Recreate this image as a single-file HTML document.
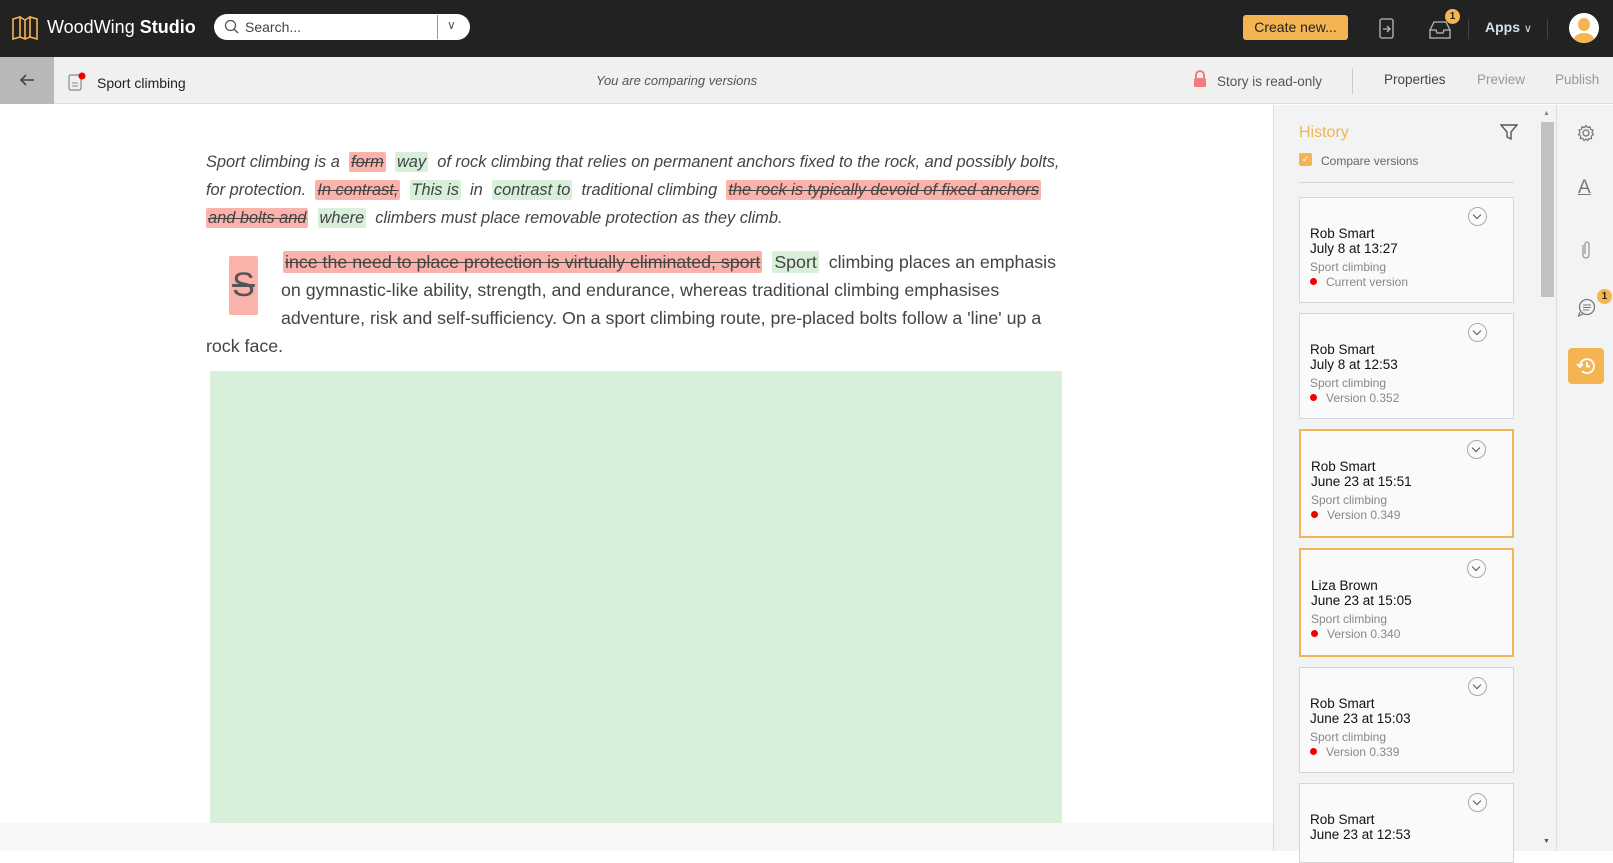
<!DOCTYPE html>
<html><head><meta charset="utf-8"><style>
*{margin:0;padding:0;box-sizing:border-box}
body{width:1613px;height:851px;overflow:hidden;background:#fff;font-family:"Liberation Sans",sans-serif;position:relative;color:#333}
.a{position:absolute}
.top{left:0;top:0;width:1613px;height:57px;background:#222}
.sub{left:0;top:57px;width:1613px;height:47px;background:#f0f0f0;border-bottom:1px solid #ddd}
.line{position:absolute;left:206px;white-space:nowrap;font-size:17.8px;color:#444;line-height:28px}
.it{font-style:italic;font-size:16.4px}
.d{background:#fbb2ab;text-decoration:line-through;padding:1px 2px;border-radius:2px}
.g{background:#d8efda;padding:1px 2px;border-radius:2px}
.card{position:absolute;left:1299px;width:215px;background:#fafafa;border:1px solid #d6d6d6}
.card.sel{border:2px solid #f5b452}
.card .n{position:absolute;left:10px;top:28px;font-size:13.5px;color:#111;line-height:15px}
.card .s{position:absolute;left:10px;top:62px;font-size:12px;color:#888;line-height:15px}
.card .dot{display:inline-block;width:7px;height:7px;border-radius:50%;background:#e00;margin-right:9px;vertical-align:1px}
.card .c{position:absolute;right:26px;top:9px;width:19px;height:19px;border:1px solid #aaa;border-radius:50%}
.card .c:after{content:"";position:absolute;left:5px;top:4px;width:5px;height:5px;border-right:1.3px solid #555;border-bottom:1.3px solid #555;transform:rotate(45deg)}
</style></head><body>
<div class="a top"></div>
<svg class="a" style="left:12px;top:16px" width="26" height="24" viewBox="0 0 26 24"><path d="M1 3 L8 1 L8 21 L1 23Z M8 1 L13 4 L18 1 L18 21 L13 23 L8 21Z M18 1 L25 3 L25 23 L18 21Z M13 4 L13 23" fill="none" stroke="#f5b452" stroke-width="1.6"/></svg>
<div class="a" style="left:47px;top:17px;font-size:18px;color:#fff">WoodWing <b>Studio</b></div>
<div class="a" style="left:214px;top:14px;width:256px;height:26px;background:#fff;border-radius:13px"></div>
<svg class="a" style="left:224px;top:19px" width="16" height="16"><circle cx="6.5" cy="6.5" r="5" fill="none" stroke="#555" stroke-width="1.3"/><path d="M10 10 L14 14" stroke="#555" stroke-width="1.3"/></svg>
<div class="a" style="left:245px;top:19px;font-size:14px;color:#444">Search...</div>
<div class="a" style="left:437px;top:15px;width:1px;height:24px;background:#999"></div>
<div class="a" style="left:447px;top:18px;font-size:12px;color:#555">&#8744;</div>
<div class="a" style="left:1243px;top:15px;width:105px;height:25px;background:#f5b452;border-radius:3px;font-size:14px;color:#222;text-align:center;line-height:25px">Create new...</div>
<svg class="a" style="left:1378px;top:18px" width="18" height="22"><rect x="2" y="1" width="13" height="19" rx="2" fill="none" stroke="#bbb" stroke-width="1.3"/><path d="M5 11 H12 M9 8 L12 11 L9 14" fill="none" stroke="#bbb" stroke-width="1.3"/></svg>
<svg class="a" style="left:1428px;top:20px" width="24" height="20"><path d="M2 10 L6 2 H18 L22 10 V18 H2 Z M2 10 H8 L9 13 H15 L16 10 H22" fill="none" stroke="#bbb" stroke-width="1.3"/></svg>
<div class="a" style="left:1445px;top:9px;width:15px;height:15px;border-radius:50%;background:#f5b452;font-size:10px;text-align:center;line-height:15px;color:#222;font-weight:bold">1</div>
<div class="a" style="left:1468px;top:19px;width:1px;height:20px;background:#444"></div>
<div class="a" style="left:1485px;top:19px;font-size:14px;color:#cfe0f0;font-weight:bold">Apps <span style="font-weight:normal;font-size:11px">&#8744;</span></div>
<div class="a" style="left:1547px;top:19px;width:1px;height:20px;background:#444"></div>
<div class="a" style="left:1569px;top:13px;width:30px;height:30px;border-radius:50%;background:#fff;overflow:hidden"><div class="a" style="left:9px;top:5px;width:12px;height:13px;border-radius:50%;background:#f5b452"></div><div class="a" style="left:4px;top:20px;width:22px;height:14px;border-radius:10px 10px 0 0;background:#f5b452"></div></div>

<div class="a sub"></div>
<div class="a" style="left:0;top:57px;width:54px;height:47px;background:#b8b8b8"></div>
<svg class="a" style="left:18px;top:72px" width="18" height="16"><path d="M16 8 H3 M8 3 L3 8 L8 13" fill="none" stroke="#444" stroke-width="1.6"/></svg>
<svg class="a" style="left:68px;top:72px" width="18" height="20"><rect x="1" y="3" width="12" height="15" rx="1.5" fill="none" stroke="#888" stroke-width="1.2"/><path d="M4 11 H10 M4 14 H10" stroke="#888"/><circle cx="14" cy="4" r="3.5" fill="#e00"/></svg>
<div class="a" style="left:97px;top:75px;font-size:14px;color:#222">Sport climbing</div>
<div class="a" style="left:596px;top:73px;font-size:13px;color:#555;font-style:italic">You are comparing versions</div>
<svg class="a" style="left:1193px;top:70px" width="14" height="18"><path d="M3 8 V5 a4 4 0 0 1 8 0 V8" fill="none" stroke="#f47a80" stroke-width="2"/><rect x="1" y="8" width="12" height="9" rx="1.5" fill="#f47a80"/></svg>
<div class="a" style="left:1217px;top:74px;font-size:13.5px;color:#555">Story is read-only</div>
<div class="a" style="left:1352px;top:68px;width:1px;height:26px;background:#ccc"></div>
<div class="a" style="left:1384px;top:72px;font-size:13.5px;color:#444">Properties</div>
<div class="a" style="left:1477px;top:72px;font-size:13.5px;color:#999">Preview</div>
<div class="a" style="left:1555px;top:72px;font-size:13.5px;color:#999">Publish</div>

<div class="line it" style="top:148px">Sport climbing is a &nbsp;<span class="d">form</span> &nbsp;<span class="g">way</span> &nbsp;of rock climbing that relies on permanent anchors fixed to the rock, and possibly bolts,</div>
<div class="line it" style="top:176px">for protection. &nbsp;<span class="d">In contrast,</span> &nbsp;<span class="g">This is</span> &nbsp;in &nbsp;<span class="g">contrast to</span> &nbsp;traditional climbing &nbsp;<span class="d">the rock is typically devoid of fixed anchors</span></div>
<div class="line it" style="top:204px"><span class="d">and bolts and</span> &nbsp;<span class="g">where</span> &nbsp;climbers must place removable protection as they climb.</div>
<div class="a" style="left:229px;top:256px;width:29px;height:59px;background:#fbb2ab;border-radius:2px;font-size:34px;color:#555;text-align:center;line-height:59px;text-decoration:line-through">S</div>
<div class="line" style="top:248px;left:283px"><span class="d">ince the need to place protection is virtually eliminated, sport</span> &nbsp;<span class="g">Sport</span> &nbsp;climbing places an emphasis</div>
<div class="line" style="top:276px;left:281px">on gymnastic-like ability, strength, and endurance, whereas traditional climbing emphasises</div>
<div class="line" style="top:304px;left:281px">adventure, risk and self-sufficiency. On a sport climbing route, pre-placed bolts follow a 'line' up a</div>
<div class="line" style="top:332px">rock face.</div>
<div class="a" style="left:210px;top:371px;width:852px;height:452px;background:#d8efda"></div>
<div class="a" style="left:0;top:823px;width:1273px;height:28px;background:#f7f7f7"></div>

<div class="a" style="left:1273px;top:105px;width:268px;height:746px;background:#f2f3f5;border-left:1px solid #ddd"></div>
<div class="a" style="left:1299px;top:124px;font-size:16px;color:#f5b452">History</div>
<svg class="a" style="left:1500px;top:124px" width="18" height="16"><path d="M1 1 H17 L11 8 V15 L7 13 V8 Z" fill="none" stroke="#555" stroke-width="1.4"/></svg>
<div class="a" style="left:1299px;top:153px;width:13px;height:13px;background:#f5b452;border-radius:2px;color:#fff;font-size:9px;text-align:center;line-height:13px">&#10003;</div>
<div class="a" style="left:1321px;top:154px;font-size:12px;color:#666">Compare versions</div>
<div class="a" style="left:1299px;top:182px;width:215px;height:1px;background:#d6d6d6"></div>

<div class="card" style="top:197px;height:106px"><div class="c"></div><div class="n">Rob Smart<br>July 8 at 13:27</div><div class="s">Sport climbing<br><span class="dot"></span>Current version</div></div>
<div class="card" style="top:313px;height:106px"><div class="c"></div><div class="n">Rob Smart<br>July 8 at 12:53</div><div class="s">Sport climbing<br><span class="dot"></span>Version 0.352</div></div>
<div class="card sel" style="top:429px;height:109px"><div class="c"></div><div class="n">Rob Smart<br>June 23 at 15:51</div><div class="s">Sport climbing<br><span class="dot"></span>Version 0.349</div></div>
<div class="card sel" style="top:548px;height:109px"><div class="c"></div><div class="n">Liza Brown<br>June 23 at 15:05</div><div class="s">Sport climbing<br><span class="dot"></span>Version 0.340</div></div>
<div class="card" style="top:667px;height:106px"><div class="c"></div><div class="n">Rob Smart<br>June 23 at 15:03</div><div class="s">Sport climbing<br><span class="dot"></span>Version 0.339</div></div>
<div class="card" style="top:783px;height:80px"><div class="c"></div><div class="n">Rob Smart<br>June 23 at 12:53</div></div>

<div class="a" style="left:1539px;top:105px;width:17px;height:746px;background:#f2f3f5"></div>
<div class="a" style="left:1541px;top:122px;width:13px;height:175px;background:#c1c1c1"></div>
<div class="a" style="left:1543px;top:110px;font-size:7px;color:#888">&#9650;</div>
<div class="a" style="left:1543px;top:838px;font-size:7px;color:#555">&#9660;</div>
<div class="a" style="left:1556px;top:105px;width:57px;height:746px;background:#f2f3f5;border-left:1px solid #ddd"></div>
<svg class="a" style="left:1577px;top:124px" width="18" height="18" viewBox="0 0 18 18"><circle cx="9" cy="9" r="3" fill="none" stroke="#777" stroke-width="1.3"/><path d="M9 1.5 L10.5 3.5 L13 2.8 L13.5 5.3 L16 6 L15 8.5 L16.5 10.5 L14.3 12 L14.5 14.6 L12 14.5 L10.7 16.6 L9 15 L7 16.6 L5.8 14.4 L3.3 14.5 L3.6 12 L1.5 10.5 L3 8.5 L2 6 L4.6 5.3 L5 2.8 L7.5 3.5 Z" fill="none" stroke="#777" stroke-width="1.2"/></svg>
<div class="a" style="left:1578px;top:177px;font-size:19px;color:#777;text-decoration:underline">A</div>
<svg class="a" style="left:1580px;top:240px" width="12" height="20"><path d="M3 5 V15 a3 3 0 0 0 6 0 V4 a2 2 0 0 0 -4 0 V14" fill="none" stroke="#999" stroke-width="1.3"/></svg>
<svg class="a" style="left:1577px;top:298px" width="19" height="19"><circle cx="10" cy="9" r="7.5" fill="none" stroke="#777" stroke-width="1.3"/><path d="M6 7 H14 M6 9.5 H14 M6 12 H12" stroke="#777"/><path d="M3 14 L1.5 18 L6 16" fill="none" stroke="#777" stroke-width="1.2"/></svg>
<div class="a" style="left:1597px;top:289px;width:15px;height:15px;border-radius:50%;background:#f5b452;font-size:10px;font-weight:bold;text-align:center;line-height:15px;color:#222">1</div>
<div class="a" style="left:1568px;top:348px;width:36px;height:36px;background:#f5b452;border-radius:4px"></div>
<svg class="a" style="left:1576px;top:356px" width="20" height="20"><path d="M4 10 a7 7 0 1 1 2 5" fill="none" stroke="#fff" stroke-width="1.8"/><path d="M1 8 L4 11 L7 8" fill="none" stroke="#fff" stroke-width="1.8"/><path d="M11 6 V10.5 H14" fill="none" stroke="#fff" stroke-width="1.8"/></svg>
</body></html>
